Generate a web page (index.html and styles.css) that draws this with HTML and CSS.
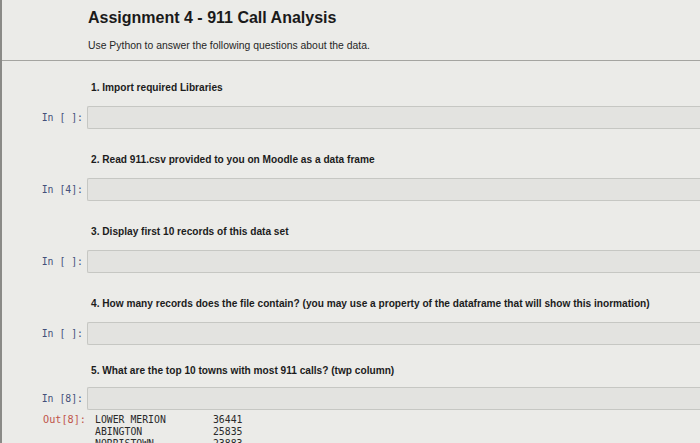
FILE: index.html
```html
<!DOCTYPE html>
<html>
<head>
<meta charset="utf-8">
<link rel="stylesheet" href="styles.css">
</head>
<body>
<div class="page">
  <header class="intro">
    <h1 class="title">Assignment 4 - 911 Call Analysis</h1>
    <p class="lead">Use Python to answer the following questions about the data.</p>
  </header>

  <section class="step">
    <p class="question">1. Import required Libraries</p>
    <div class="cell">
      <span class="prompt">In [ ]:</span>
      <div class="input"></div>
    </div>
  </section>

  <section class="step">
    <p class="question">2. Read 911.csv provided to you on Moodle as a data frame</p>
    <div class="cell">
      <span class="prompt">In [4]:</span>
      <div class="input"></div>
    </div>
  </section>

  <section class="step">
    <p class="question">3. Display first 10 records of this data set</p>
    <div class="cell">
      <span class="prompt">In [ ]:</span>
      <div class="input"></div>
    </div>
  </section>

  <section class="step">
    <p class="question">4. How many records does the file contain? (you may use a property of the dataframe that will show this inormation)</p>
    <div class="cell">
      <span class="prompt">In [ ]:</span>
      <div class="input"></div>
    </div>
  </section>

  <section class="step step-last">
    <p class="question">5. What are the top 10 towns with most 911 calls? (twp column)</p>
    <div class="cell">
      <span class="prompt">In [8]:</span>
      <div class="input"></div>
    </div>
    <div class="cell output">
      <span class="prompt prompt-out">Out[8]:</span>
<pre class="result">LOWER MERION        36441
ABINGTON            25835
NORRISTOWN          23883</pre>
    </div>
  </section>
</div>
</body>
</html>
```

FILE: styles.css
```css
html, body {
  margin: 0;
  padding: 0;
  height: 100%;
  overflow: hidden;
}

body {
  background: #ebebe8;
  font-family: "Liberation Sans", Arial, sans-serif;
  color: #1e1e1e;
}

.page {
  border-left: 2px solid #8a8a87;
  min-height: 100%;
  box-sizing: border-box;
}

.intro {
  padding: 8px 0 0 86px;
  height: 52px;
  border-bottom: 1px solid #a4a4a0;
}

.title {
  margin: 0;
  font-size: 16px;
  line-height: 20px;
  font-weight: bold;
  color: #1a1a1a;
}

.lead {
  margin: 12px 0 0;
  font-size: 10.4px;
  line-height: 12px;
  color: #262626;
}

.step {
  margin-top: 20px;
}

.step + .step {
  margin-top: 24px;
}

.step + .step-last {
  margin-top: 19px;
}

.question {
  margin: 0 0 11px 89px;
  font-size: 10.15px;
  line-height: 14px;
  font-weight: bold;
  color: #1c1c1c;
}

.step-last .question {
  margin-bottom: 9px;
}

.cell {
  display: grid;
  grid-template-columns: 85px 1fr;
  align-items: center;
}

.prompt {
  font-family: "DejaVu Sans Mono", "Liberation Mono", monospace;
  font-size: 9.8px;
  color: #44507a;
  text-align: right;
  padding-right: 4px;
}

.prompt-out {
  color: #c0554a;
  padding-right: 1px;
  font-size: 10.2px;
}

.input {
  height: 21px;
  background: #e3e3e0;
  border: 1px solid #c6c7c3;
  border-right: none;
  border-radius: 2px 0 0 2px;
}

.output {
  margin-top: 4px;
  align-items: start;
}

.result {
  margin: 0 0 0 8px;
  font-family: "DejaVu Sans Mono", "Liberation Mono", monospace;
  font-size: 9.8px;
  line-height: 12px;
  color: #2a2a2a;
}
```
